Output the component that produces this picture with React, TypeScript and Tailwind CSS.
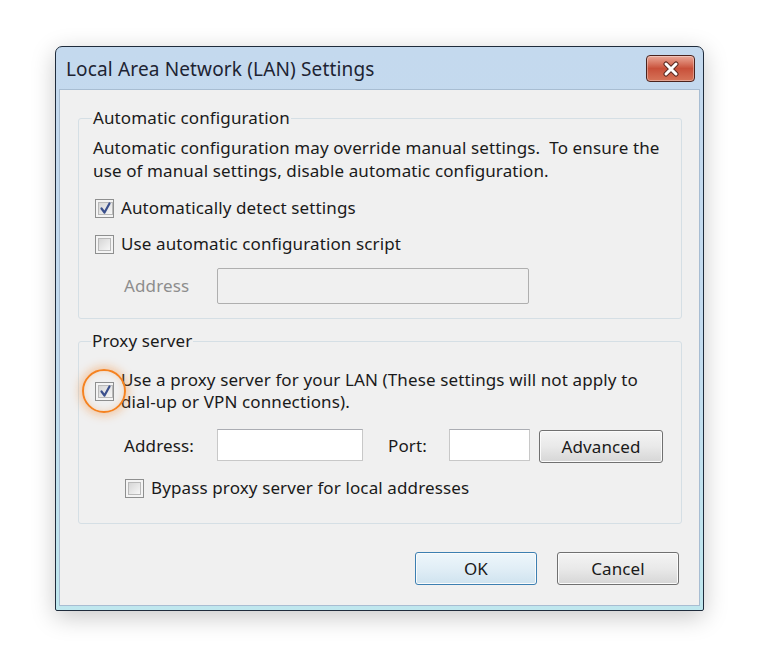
import React from "react";

const font = { fontFamily: '"Noto Sans", "Open Sans", sans-serif' };

function Check({ checked }: { checked?: boolean }) {
  return (
    <span className="w-[19px] h-[19px] shrink-0 border border-[#8e8f8f] bg-[#f4f4f4] p-[2px] flex">
      <span className="flex-1 border border-[#b9b9b9] bg-gradient-to-br from-[#d6d6d6] to-[#f7f7f7] flex items-center justify-center">
        {checked && (
          <svg width="13" height="13" viewBox="0 0 13 13">
            <path d="M2.5 6.5 L5.5 10.5 L10.5 1.5" fill="none" stroke="#3a4f8c" strokeWidth="2.2" strokeLinejoin="round" strokeLinecap="round" />
          </svg>
        )}
      </span>
    </span>
  );
}

function Btn({ children, def, className }: { children: React.ReactNode; def?: boolean; className?: string }) {
  return (
    <div
      className={
        "h-[33px] rounded-[3px] border flex items-center justify-center text-[17px] text-[#1a1a1a] shadow-[inset_0_0_0_1px_#fbfbfb] " +
        (def
          ? "border-[#3c7fb1] bg-gradient-to-b from-[#eef6fb] via-[#e1eef6] to-[#cfe3ef] "
          : "border-[#707070] bg-gradient-to-b from-[#f4f4f4] via-[#e9e9e9] to-[#d6d6d6] ") +
        (className ?? "")
      }
    >
      {children}
    </div>
  );
}

export default function App() {
  return (
    <div className="w-[757px] h-[659px] bg-white pt-[46px] pl-[55px]" style={font}>
      <div className="w-[649px] h-[565px] rounded-t-[7px] rounded-b-[2px] border border-[#1f2c3c] bg-gradient-to-b from-[#c4d9ee] via-[#c3dbef] to-[#bfe7ee] shadow-[0_6px_24px_rgba(0,0,0,0.22)] flex flex-col">
        {/* Title bar */}
        <div className="h-[42px] flex items-start justify-between pl-[10px] pr-[8px] shrink-0">
          <div className="text-[19px] tracking-[0.15px] text-[#1d2433] mt-[9px] leading-[26px]">Local Area Network (LAN) Settings</div>
          <div className="mt-[8px] w-[49px] h-[27px] rounded-[4px] border border-[#4b231d] bg-gradient-to-b from-[#eaa898] via-[#c8503a] to-[#d67459] flex items-center justify-center shadow-[inset_0_0_0_1px_rgba(255,255,255,0.35)]">
            <svg width="18" height="16" viewBox="0 0 18 16">
              <path d="M4 3 L14 13 M14 3 L4 13" stroke="#5b2a22" strokeWidth="5" strokeLinecap="round" />
              <path d="M4 3 L14 13 M14 3 L4 13" stroke="#ffffff" strokeWidth="3" strokeLinecap="round" />
            </svg>
          </div>
        </div>
        {/* Content */}
        <div className="flex-1 mx-[3px] mb-[4px] bg-[#f0f0f0] border border-[#a8bdd2] flex flex-col pl-[18px] pr-[17px] pt-[18px] text-[17px] tracking-[0.12px] text-[#1a1a1a]">
          <fieldset className="border border-[#d5dfe5] rounded-[3px] pl-[14px] pr-[10px] pb-[13px] h-[211px]">
            <legend className="px-[1px] ml-[-1px] leading-[20px]">Automatic configuration</legend>
            <p className="leading-[23px] mt-[8px] whitespace-nowrap">
              Automatic configuration may override manual settings.&nbsp; To ensure the
              <br />
              use of manual settings, disable automatic configuration.
            </p>
            <div className="flex items-center gap-[7px] ml-[2px] mt-[14px] h-[24px]">
              <Check checked />
              <span>Automatically detect settings</span>
            </div>
            <div className="flex items-center gap-[7px] ml-[2px] mt-[12px] h-[24px]">
              <Check />
              <span>Use automatic configuration script</span>
            </div>
            <div className="flex items-center ml-[31px] mt-[12px]">
              <span className="w-[93px] text-[#8d8d8d]">Address</span>
              <div className="w-[312px] h-[36px] border border-[#afafaf] rounded-[2px] bg-[#f0f0f0]" />
            </div>
          </fieldset>

          <fieldset className="mt-[12px] border border-[#d5dfe5] rounded-[3px] pl-[14px] pr-[10px] h-[193px]">
            <legend className="px-[1px] ml-[-2px] leading-[20px]">Proxy server</legend>
            <div className="relative flex items-center gap-[7px] ml-[2px] mt-[18px]">
              <Check checked />
              <span className="leading-[22px] whitespace-nowrap">
                Use a proxy server for your LAN (These settings will not apply to
                <br />
                dial-up or VPN connections).
              </span>
              <span className="absolute left-[-13px] top-[0px] w-[44px] h-[44px] rounded-full border-2 border-[#f58220] shadow-[0_0_9px_3px_rgba(245,130,32,0.35),inset_0_0_6px_rgba(245,130,32,0.25)]" />
            </div>
            <div className="flex items-center ml-[31px] mt-[16px] h-[33px]">
              <span className="w-[93px]">Address:</span>
              <div className="w-[146px] h-[32px] border border-[#c8c8c8] border-t-[#abadb3] bg-white mt-[-2px]" />
              <span className="ml-[25px] w-[61px]">Port:</span>
              <div className="w-[81px] h-[32px] border border-[#c8c8c8] border-t-[#abadb3] bg-white mt-[-2px]" />
              <Btn className="ml-[9px] w-[124px] mt-[2px]">Advanced</Btn>
            </div>
            <div className="flex items-center gap-[7px] ml-[32px] mt-[14px] h-[24px]">
              <Check />
              <span>Bypass proxy server for local addresses</span>
            </div>
          </fieldset>

          <div className="flex justify-end gap-[20px] mt-[28px] pr-[3px]">
            <Btn def className="w-[122px]">OK</Btn>
            <Btn className="w-[122px]">Cancel</Btn>
          </div>
        </div>
      </div>
    </div>
  );
}
